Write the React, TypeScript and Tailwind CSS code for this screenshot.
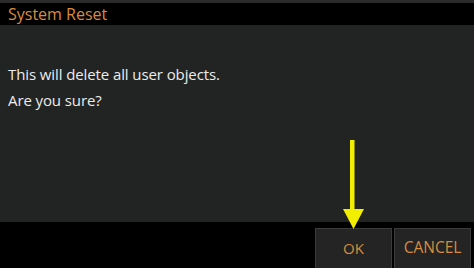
export default function App() {
  return (
    <div
      className="w-[474px] h-[268px] bg-black flex flex-col overflow-hidden relative"
      style={{ fontFamily: '"Open Sans", "Noto Sans", sans-serif' }}
    >
      <div className="h-[3px] bg-[#2b2b2b]" />
      <div className="h-[22px] bg-black flex items-center pl-[8px]">
        <span className="text-[16px] leading-none text-[#d98b3f]">System Reset</span>
      </div>
      <div className="h-[197px] bg-[#222423] pl-[8px] pt-[36px] text-[#ececec] text-[15px] leading-[26px] tracking-[-0.1px]">
        <div>This will delete all user objects.</div>
        <div>Are you sure?</div>
      </div>
      <div className="flex-1 flex justify-end items-end pr-[3px] gap-[2px]">
        <div className="w-[77px] h-[40px] bg-[#232423] border border-[#3a3b3a] border-b-0 flex items-center justify-center text-[#d98b3f] text-[15px] pb-[1px]">
          OK
        </div>
        <div className="w-[77px] h-[40px] bg-[#232423] border border-[#3a3b3a] border-b-0 flex items-center justify-center text-[#d98b3f] text-[15.5px] pb-[1px]">
          CANCEL
        </div>
      </div>
      <svg className="absolute left-0 top-0" width="474" height="268" viewBox="0 0 474 268">
        <rect x="350" y="140" width="4.5" height="72" fill="#f2ee00" />
        <polygon points="343,209 364,209 353.5,229" fill="#f2ee00" />
      </svg>
    </div>
  );
}
